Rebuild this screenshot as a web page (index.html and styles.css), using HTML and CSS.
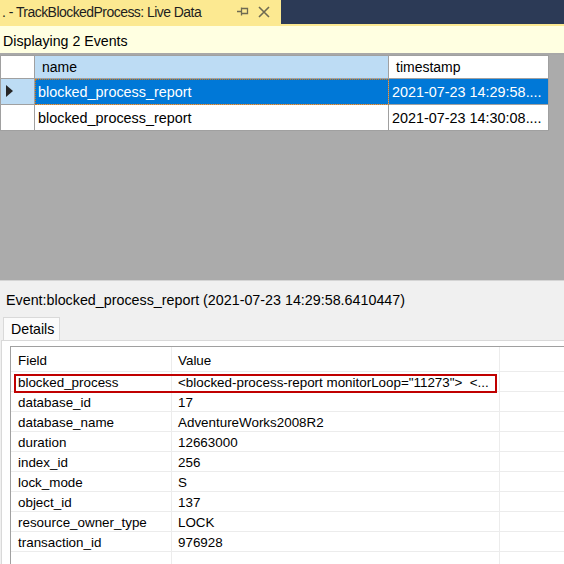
FILE: index.html
```html
<!DOCTYPE html>
<html lang="en">
<head>
    <meta charset="UTF-8">
    <title>TrackBlockedProcess: Live Data</title>
    <link rel="stylesheet" href="styles.css">
</head>
<body>
    <div class="doc-tabs">
        <div class="doc-tab">
            <span class="doc-title">. - TrackBlockedProcess: Live Data</span>
            <svg class="pin" width="12" height="12" viewBox="0 0 12 12">
                <path d="M0 5.5H4M4.5 1.5V9.5M4.5 2.5H10.5V7.5H4.5" fill="none" stroke="#6e6a52" stroke-width="1.3"/>
            </svg>
            <svg class="close" width="12" height="12" viewBox="0 0 12 12">
                <path d="M1 1L11 11M11 1L1 11" fill="none" stroke="#6e6a52" stroke-width="1.6"/>
            </svg>
        </div>
        <div class="doc-fill"></div>
    </div>

    <div class="info-bar">Displaying 2 Events</div>

    <div class="grid-area">
        <table class="events">
            <tr class="head">
                <td class="row-head"></td>
                <td class="col-name active">name</td>
                <td class="col-time">timestamp</td>
            </tr>
            <tr class="selected">
                <td class="row-head current">
                    <svg width="8" height="12" viewBox="0 0 8 12"><path d="M0 0L7 6L0 12Z" fill="#262626"/></svg>
                </td>
                <td class="focus">blocked_process_report</td>
                <td>2021-07-23 14:29:58....</td>
            </tr>
            <tr>
                <td class="row-head"></td>
                <td>blocked_process_report</td>
                <td>2021-07-23 14:30:08....</td>
            </tr>
        </table>
    </div>

    <div class="details-pane">
        <div class="event-label">Event:blocked_process_report (2021-07-23 14:29:58.6410447)</div>
        <div class="tabs">
            <div class="tab">Details</div>
        </div>
        <div class="tab-page">
            <div class="fields-wrap">
                <table class="fields">
                    <tr class="head"><td class="f-name">Field</td><td class="f-value">Value</td><td></td></tr>
                    <tr><td>blocked_process</td><td>&lt;blocked-process-report monitorLoop="11273"&gt;&nbsp;&nbsp;&lt;...</td><td></td></tr>
                    <tr><td>database_id</td><td>17</td><td></td></tr>
                    <tr><td>database_name</td><td>AdventureWorks2008R2</td><td></td></tr>
                    <tr><td>duration</td><td>12663000</td><td></td></tr>
                    <tr><td>index_id</td><td>256</td><td></td></tr>
                    <tr><td>lock_mode</td><td>S</td><td></td></tr>
                    <tr><td>object_id</td><td>137</td><td></td></tr>
                    <tr><td>resource_owner_type</td><td>LOCK</td><td></td></tr>
                    <tr><td>transaction_id</td><td>976928</td><td></td></tr>
                    <tr><td></td><td></td><td></td></tr>
                </table>
                <div class="highlight"></div>
            </div>
        </div>
    </div>
</body>
</html>
```

FILE: styles.css
```css
html, body {
    margin: 0;
    padding: 0;
}

body {
    width: 564px;
    height: 564px;
    overflow: hidden;
    font-family: "Liberation Sans", Arial, sans-serif;
    color: #000;
    background: #f0f0f0;
}

/* document tab strip */
.doc-tabs {
    display: flex;
    height: 24px;
    border-bottom: 2px solid #fce991;
}

.doc-tab {
    width: 281px;
    display: flex;
    align-items: center;
    background: #fce991;
    font-size: 14px;
    color: #1e1e1e;
}

.doc-title {
    width: 224px;
    padding-left: 2px;
    letter-spacing: -0.55px;
    white-space: nowrap;
    overflow: hidden;
}

.pin {
    margin-left: 11px;
}

.close {
    margin-left: 9px;
}

.doc-fill {
    flex-grow: 1;
    background: #2c3a56;
}

.info-bar {
    height: 29px;
    display: flex;
    align-items: center;
    padding: 3px 0 0 3px;
    box-sizing: border-box;
    background: #ffffe1;
    font-size: 14.2px;
    border-bottom: 2px solid #a8a8a8;
}

/* events grid */
.grid-area {
    height: 225px;
    background: #ababab;
}

.events {
    border-collapse: collapse;
    background: #fff;
    font-size: 14.4px;
    table-layout: fixed;
}

.events td {
    border: 1px solid #a0a0a0;
    height: 25px;
    padding: 0 0 0 3px;
    white-space: nowrap;
    overflow: hidden;
}

.events .head td {
    height: 22px;
    padding-left: 7px;
    font-size: 14px;
}

.events .row-head {
    width: 34px;
    padding: 0 0 0 5px;
    box-sizing: border-box;
}

.events .col-name {
    width: 346px;
}

.events .col-time {
    width: 152px;
}

.events .active,
.events .current {
    background: #bddcf4;
}

.events .selected td:not(.row-head) {
    background: #0078d7;
    color: #fff;
}

.events .selected .focus {
    outline: 1px dotted #d07a1a;
    outline-offset: -1px;
}

/* details pane */
.details-pane {
    height: 284px;
    border-top: 1px solid #d4d4d4;
}

.event-label {
    height: 36px;
    display: flex;
    align-items: center;
    padding: 1px 0 0 6px;
    box-sizing: border-box;
    font-size: 14.3px;
    white-space: nowrap;
}

.tabs {
    display: flex;
    padding-left: 3px;
}

.tab {
    width: 57px;
    height: 23px;
    display: flex;
    align-items: center;
    padding-left: 7px;
    box-sizing: border-box;
    background: #fbfbfb;
    border: 1px solid #d9d9d9;
    border-bottom: none;
    font-size: 14.2px;
}

.tab-page {
    height: 230px;
    margin-left: 1px;
    padding: 5px 0 0 8px;
    background: #fff;
    border-top: 1px solid #d9d9d9;
    border-left: 1px solid #d9d9d9;
}

.fields-wrap {
    position: relative;
    border-left: 1px solid #a0a0a0;
    border-top: 1px solid #a0a0a0;
    height: 100%;
    overflow: hidden;
}

.fields {
    border-collapse: collapse;
    table-layout: fixed;
    width: 600px;
    font-size: 13.4px;
}

.fields td {
    height: 18px;
    padding: 1px 0 0 6px;
    border-right: 1px solid #ececec;
    border-bottom: 1px solid #ececec;
    white-space: nowrap;
    overflow: hidden;
}

.fields .head td {
    height: 22px;
    padding-top: 2px;
}

.fields td:first-child {
    padding-left: 7px;
}

.fields .f-name {
    width: 153px;
}

.fields .f-value {
    width: 321px;
}

.highlight {
    position: absolute;
    left: 3px;
    top: 27px;
    width: 483px;
    height: 19px;
    box-sizing: border-box;
    border: 2px solid #c00000;
}
```
